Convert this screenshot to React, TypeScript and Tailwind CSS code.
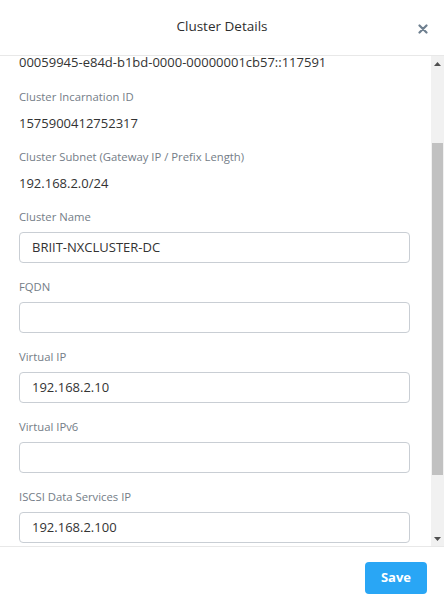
import React from "react";

const font = { fontFamily: '"Open Sans", "Noto Sans", sans-serif' };

function Label({ children, mb }: { children: React.ReactNode; mb: string }) {
  return (
    <div className={`text-[11.3px] leading-[16px] text-[#747d87] ${mb}`}>{children}</div>
  );
}

function Value({ children, mb, lh = "leading-[18px]" }: { children: React.ReactNode; mb: string; lh?: string }) {
  return <div className={`text-[13px] ${lh} text-[#333333] ${mb}`}>{children}</div>;
}

function Input({ value, mb }: { value: string; mb: string }) {
  return (
    <div
      className={`h-[31px] w-[391px] rounded-[4px] border border-[#c9ced4] bg-white pl-[12px] flex items-center text-[13px] text-[#333333] ${mb}`}
    >
      {value}
    </div>
  );
}

export default function App() {
  return (
    <div className="w-[444px] h-[609px] bg-white flex flex-col overflow-hidden" style={font}>
      <div className="h-[56px] shrink-0 border-b border-[#e8e8e8] flex items-center justify-center relative">
        <span className="text-[13.5px] text-[#2e2e2e] -mt-[3px]">Cluster Details</span>
        <svg
          className="absolute left-[418px] top-[23.5px]"
          width="10"
          height="10"
          viewBox="0 0 10 10"
        >
          <path d="M1.5 1.5 L8.5 8.5 M8.5 1.5 L1.5 8.5" stroke="#6f8090" strokeWidth="2.2" strokeLinecap="round" />
        </svg>
      </div>
      <div className="h-[490px] shrink-0 flex">
        <div className="flex-1 overflow-hidden pl-[19px]">
          <div className="flex flex-col">
            <Value mb="mb-[21px]" lh="leading-[12px]">00059945-e84d-b1bd-0000-00000001cb57::117591</Value>
            <Label mb="mb-[9px]">Cluster Incarnation ID</Label>
            <Value mb="mb-[17px]">1575900412752317</Value>
            <Label mb="mb-[9px]">Cluster Subnet (Gateway IP / Prefix Length)</Label>
            <Value mb="mb-[17px]">192.168.2.0/24</Value>
            <Label mb="mb-[7px]">Cluster Name</Label>
            <Input value="BRIIT-NXCLUSTER-DC" mb="mb-[16px]" />
            <Label mb="mb-[7px]">FQDN</Label>
            <Input value="" mb="mb-[16px]" />
            <Label mb="mb-[7px]">Virtual IP</Label>
            <Input value="192.168.2.10" mb="mb-[16px]" />
            <Label mb="mb-[7px]">Virtual IPv6</Label>
            <Input value="" mb="mb-[16px]" />
            <Label mb="mb-[7px]">ISCSI Data Services IP</Label>
            <Input value="192.168.2.100" mb="mb-[16px]" />
          </div>
        </div>
        <div className="w-[13px] shrink-0 bg-[#f1f1f1] flex flex-col items-center">
          <div className="h-[15px] w-full flex items-center justify-center">
            <svg width="7" height="4" viewBox="0 0 7 4">
              <path d="M0 4 L3.5 0 L7 4 Z" fill="#505050" />
            </svg>
          </div>
          <div className="h-[72px]" />
          <div className="h-[332px] w-[11px] bg-[#c1c1c1]" />
          <div className="flex-1" />
          <div className="h-[15px] w-full flex items-center justify-center">
            <svg width="7" height="4" viewBox="0 0 7 4">
              <path d="M0 0 L7 0 L3.5 4 Z" fill="#505050" />
            </svg>
          </div>
        </div>
      </div>
      <div className="flex-1 border-t border-[#e8e8e8] flex items-center justify-end pr-[17px]">
        <button className="h-[32px] w-[62px] rounded-[4px] bg-[#29a6f5] text-white text-[13px] font-bold">
          Save
        </button>
      </div>
    </div>
  );
}
